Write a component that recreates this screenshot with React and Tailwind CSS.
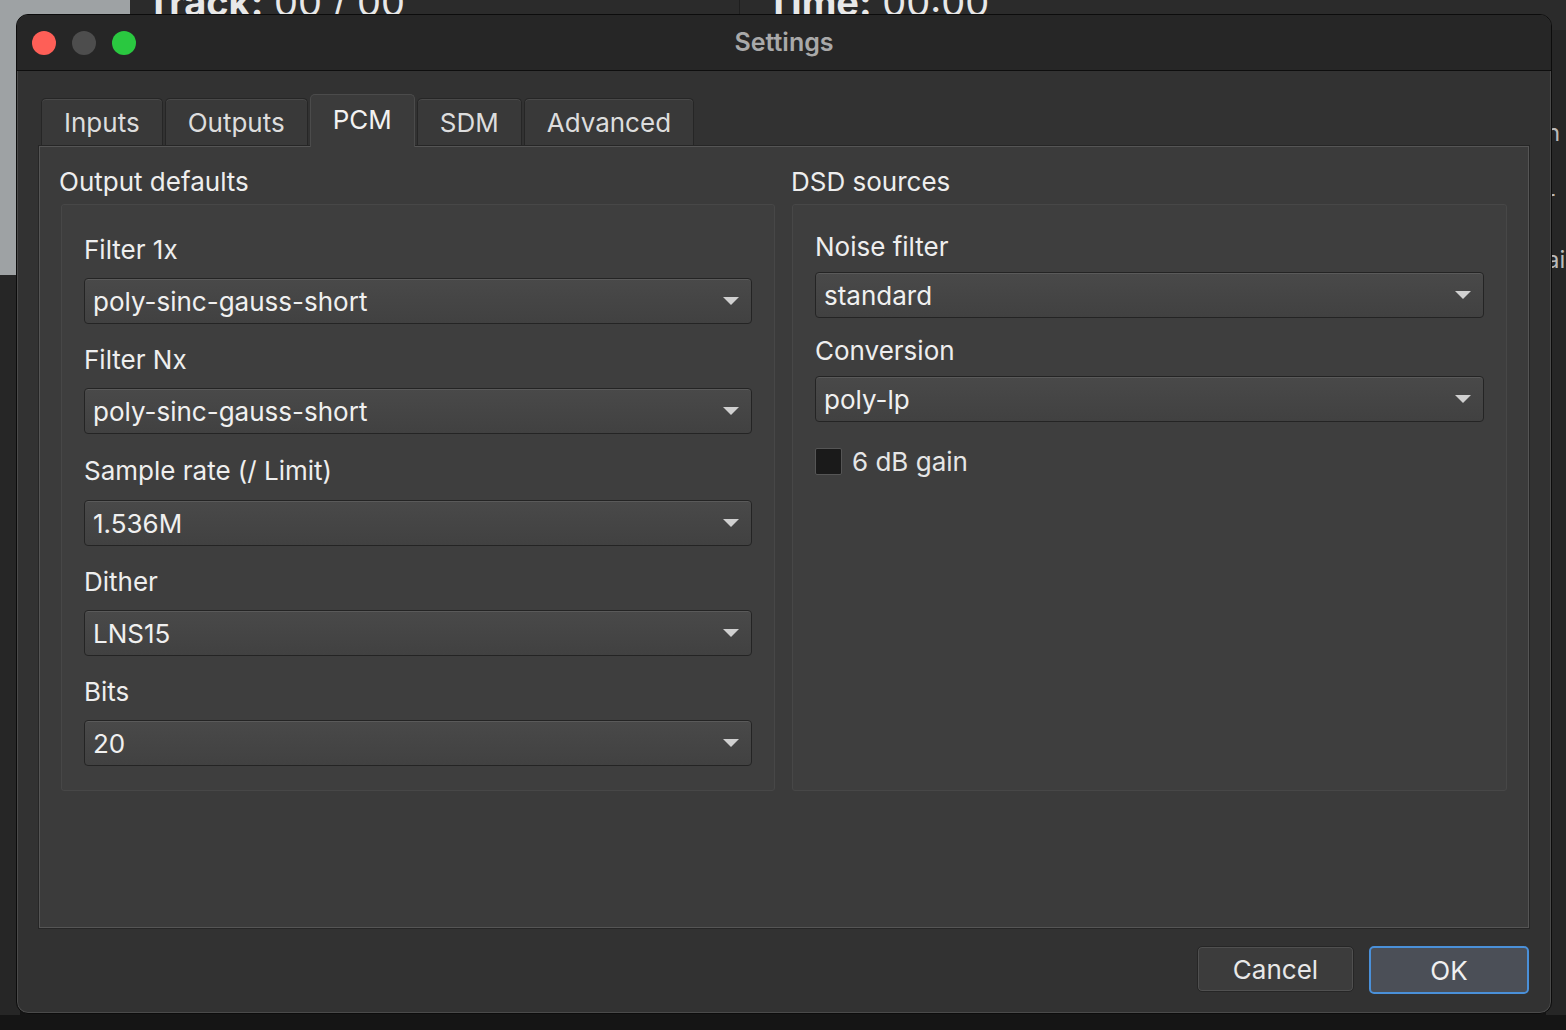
import React from "react";

const font = { fontFamily: "Inter, 'Noto Sans', sans-serif" };

function Combo({ value }) {
  return (
    <div className="h-[46px] shrink-0 rounded-[4px] border border-[#242424] bg-gradient-to-b from-[#494949] to-[#414141] shadow-[inset_0_1px_0_#5a5a5a] flex items-center justify-between pl-[8px] pr-[12px]">
      <span className="text-[26px] text-[#f0f0f0]">{value}</span>
      <svg width="16" height="9" viewBox="0 0 16 9"><path d="M0 0 L16 0 L8 8 Z" fill="#d0d0d0" /></svg>
    </div>
  );
}

function Field({ label, value, lh }) {
  return (
    <div className="flex flex-col">
      <div className={lh + " text-[26px] text-[#eeeeee] flex items-center"}>{label}</div>
      <Combo value={value} />
    </div>
  );
}

export default function App() {
  const tabs = ["Inputs", "Outputs", "PCM", "SDM", "Advanced"];
  return (
    <div className="relative w-[1566px] h-[1030px] bg-[#151515] overflow-hidden" style={font}>
      <div className="absolute left-0 top-0 w-[1566px] h-[30px] bg-[#2b2b2b] flex">
        <div className="w-[130px] h-full bg-[#9ea2a4]" />
        <div className="relative w-[610px] h-full border-r border-[#1e1e1e]">
          <div className="absolute left-[16px] top-[-20px] text-[38px] leading-[44px] text-[#e8e8e8]"><b>Track:</b> 00 / 00</div>
        </div>
        <div className="relative flex-1 h-full">
          <div className="absolute left-[26px] top-[-20px] text-[38px] leading-[44px] text-[#e8e8e8]"><b>Time:</b> 00:00</div>
        </div>
      </div>
      <div className="absolute left-0 top-0 w-[20px] h-[275px] bg-[#9ea2a4]" />
      <div className="absolute left-0 top-[275px] w-[20px] h-[740px] bg-[#262626]" />
      <div className="absolute right-0 top-[30px] w-[20px] h-[985px] bg-[#262626] text-[#bbb] text-[24px]">
        <div className="mt-[85px]">n</div><div className="mt-[30px]">r</div><div className="mt-[25px]">ai</div>
      </div>

      <div className="absolute left-[16px] top-[14px] w-[1536px] h-[1000px] rounded-[12px] border border-[#0c0c0c] bg-[#323232] overflow-hidden flex flex-col shadow-[0_0_0_1px_#4a4a4a_inset]">
        <div className="h-[56px] bg-[#262626] border-b border-[#0e0e0e] flex items-center relative shrink-0">
          <div className="flex gap-[16px] pl-[15px]">
            <div className="w-[24px] h-[24px] rounded-full bg-[#fe5f57]" />
            <div className="w-[24px] h-[24px] rounded-full bg-[#4d4d4d]" />
            <div className="w-[24px] h-[24px] rounded-full bg-[#2ac840]" />
          </div>
          <div className="absolute inset-0 flex items-center justify-center text-[25px] font-semibold text-[#a9a9a9]">Settings</div>
        </div>

        <div className="flex-1 flex flex-col px-[22px] pt-[26px]">
          <div className="flex items-end pl-[2px] gap-[2px] h-[49px]">
            {tabs.map((t) => {
              const active = t === "PCM";
              return (
                <div key={t}
                  className={active
                    ? "h-[53px] -mb-[1px] z-10 px-[22px] rounded-t-[5px] border border-b-0 border-[#4b4b4b] bg-[#3b3b3b] flex items-center text-[26px] text-[#f2f2f2] pb-[4px]"
                    : "h-[48px] px-[22px] rounded-t-[5px] border border-b-0 border-[#262626] bg-[#393939] flex items-center text-[26px] text-[#dddddd] shadow-[inset_0_1px_0_#4a4a4a]"}>
                  {t}
                </div>
              );
            })}
          </div>
          <div className="h-[782px] border border-[#555555] bg-[#3b3b3b] shadow-[0_0_0_1px_#262626] flex gap-[17px] px-[21px] pt-[20px]">
            <div className="w-[719px] flex flex-col">
              <div className="text-[26px] text-[#eeeeee] h-[37px] leading-[30px] -ml-[2px]">Output defaults</div>
              <div className="h-[587px] border border-[#474747] rounded-[3px] bg-[#3e3e3e] px-[22px] pt-[15px] flex flex-col gap-[6px]">
                <Field lh="h-[58px]" label="Filter 1x" value="poly-sinc-gauss-short" />
                <Field lh="h-[58px]" label="Filter Nx" value="poly-sinc-gauss-short" />
                <Field lh="h-[60px]" label="Sample rate (/ Limit)" value="1.536M" />
                <Field lh="h-[58px]" label="Dither" value="LNS15" />
                <Field lh="h-[58px]" label="Bits" value="20" />
              </div>
            </div>
            <div className="w-[720px] flex flex-col">
              <div className="text-[26px] text-[#eeeeee] h-[37px] leading-[30px] -ml-[1px]">DSD sources</div>
              <div className="h-[587px] border border-[#474747] rounded-[3px] bg-[#3e3e3e] px-[22px] pt-[15px] flex flex-col gap-[6px]">
                <Field lh="h-[52px]" label="Noise filter" value="standard" />
                <Field lh="h-[52px]" label="Conversion" value="poly-lp" />
                <div className="flex items-center gap-[10px] mt-[14px]">
                  <div className="w-[27px] h-[27px] border border-[#555] bg-[#1a1a1a] rounded-[2px]" />
                  <span className="text-[26px] text-[#e6e6e6]">6 dB gain</span>
                </div>
              </div>
            </div>
          </div>
          <div className="flex justify-end gap-[15px] mt-[18px]">
            <div className="w-[157px] h-[46px] rounded-[5px] border border-[#262626] bg-[#3c3c3c] shadow-[inset_0_0_0_1px_#505050] flex items-center justify-center text-[26px] text-[#e8e8e8]">Cancel</div>
            <div className="w-[160px] h-[48px] rounded-[5px] border-2 border-[#4a90d9] bg-[#4b4f57] flex items-center justify-center text-[26px] text-[#f0f0f0]">OK</div>
          </div>
        </div>
      </div>
    </div>
  );
}
